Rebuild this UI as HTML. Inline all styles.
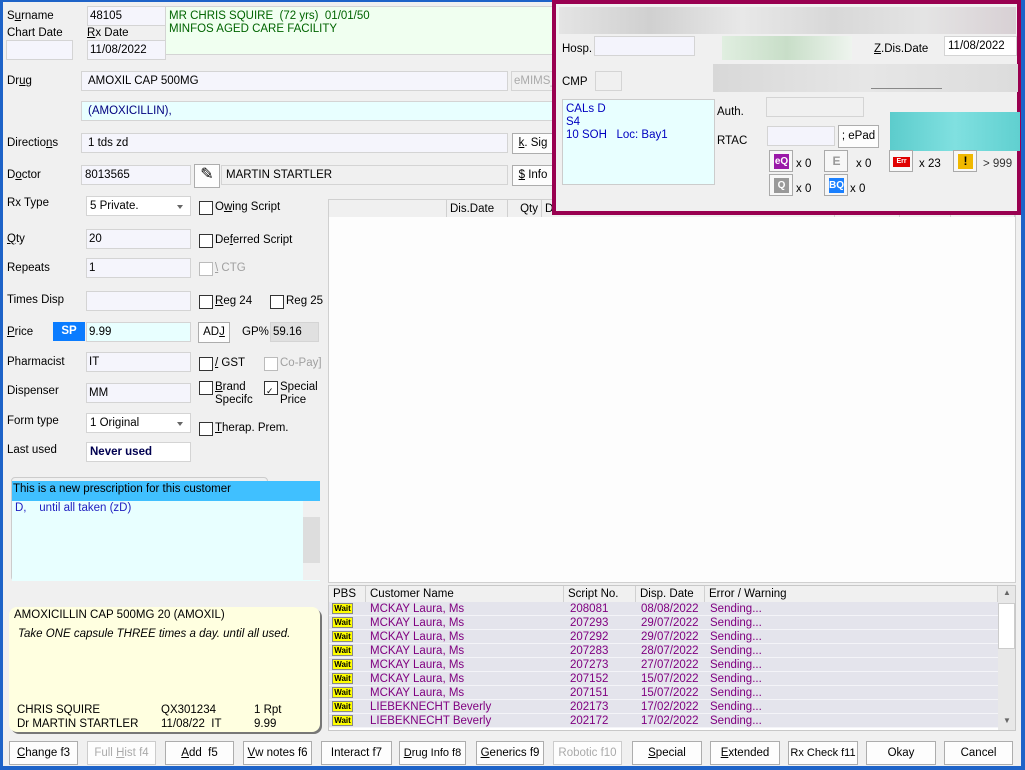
<!DOCTYPE html>
<html><head><meta charset="utf-8"><style>
*{box-sizing:border-box;margin:0;padding:0}
html,body{width:1025px;height:770px;overflow:hidden}
body{background:#f0f0f0;font-family:"Liberation Sans",sans-serif;font-size:11.5px;color:#000;position:relative;white-space:nowrap}
.a{position:absolute}
.l{position:absolute;left:7px;margin-top:1px}
.in{position:absolute;background:#f5f5fc;border:1px solid #d4d4d4;padding:3px 0 0 2px;height:20px;white-space:nowrap;overflow:hidden}
.btn{position:absolute;background:#fdfdfd;border:1px solid #adadad;text-align:center;line-height:22px;height:24px;white-space:nowrap;overflow:hidden}
.cb{position:absolute;padding-left:16px;margin-top:1px}
.cb:before{content:"";position:absolute;left:0;top:0;width:12px;height:12px;border:1px solid #333;background:#fff}
.cb.d{color:#a0a0a0}.cb.d:before{border-color:#bbb}
.sel:after{content:"";position:absolute;right:7px;top:8px;border:3px solid transparent;border-top:4px solid #666}
.th{position:absolute;top:0;height:17px;border-right:1px solid #d0d0d0;padding:3px 3px;background:#f0f0f0}
.row{position:absolute;left:0;width:669px;height:14px;background:#e4e4ec;border-bottom:1px solid #f4f4f8;color:#800080;line-height:14px}
.row span{position:absolute;top:0}
.w{position:absolute;left:3px;top:1px;width:21px;height:11px;background:#ff0;border:1px solid #888;font-size:8px;line-height:9px;color:#000;text-align:center;font-weight:bold}
.ico{position:absolute;width:24px;height:22px;border:1px solid #aaa;background:#f7f7f7}
.ico i{position:absolute;left:4px;top:3px;width:15px;height:15px;font-style:normal;font-weight:bold;font-size:10px;color:#fff;text-align:center;line-height:15px}
</style></head><body>
<div class="a" style="left:0;top:0;width:3px;height:770px;background:#1e63c8"></div>
<div class="a" style="left:0;top:0;width:1025px;height:2px;background:#1e63c8"></div>
<div class="a" style="left:0;top:766px;width:1025px;height:4px;background:#1e63c8"></div>
<div class="a" style="left:1021px;top:0;width:4px;height:770px;background:#1e63c8"></div>

<div class="l" style="top:9px">S<u>u</u>rname</div>
<div class="l" style="top:26px">Chart Date</div>
<div class="a" style="left:87px;top:27px"><u>R</u>x Date</div>
<div class="in" style="left:87px;top:6px;width:79px">48105</div>
<div class="in" style="left:6px;top:40px;width:67px"></div>
<div class="in" style="left:87px;top:40px;width:79px">11/08/2022</div>
<div class="a" style="left:165px;top:6px;width:400px;height:49px;background:#f0fff0;border:1px solid #d4d4d4;color:#006400;padding:3px 0 0 3px;line-height:13px">MR CHRIS SQUIRE &nbsp;(72 yrs) &nbsp;01/01/50<br>MINFOS AGED CARE FACILITY</div>

<div class="l" style="top:74px">Dr<u>u</u>g</div>
<div class="in" style="left:81px;top:71px;width:427px;padding-left:6px">AMOXIL CAP 500MG</div>
<div class="in" style="left:511px;top:71px;width:45px;color:#aaa;background:#f0f0f0">eMIMS_</div>
<div class="in" style="left:81px;top:101px;width:480px;background:#e8ffff;color:#000080;padding-left:6px">(AMOXICILLIN),</div>
<div class="l" style="top:136px">Directio<u>n</u>s</div>
<div class="in" style="left:81px;top:133px;width:427px;padding-left:6px">1 tds zd</div>
<div class="btn" style="left:512px;top:133px;width:42px;height:21px;line-height:19px"><u>k</u>. Sig</div>
<div class="l" style="top:168px">D<u>o</u>ctor</div>
<div class="in" style="left:81px;top:165px;width:110px;padding-left:3px">8013565</div>
<div class="btn" style="left:194px;top:164px;width:26px;height:24px;line-height:20px;font-size:16px">✎</div>
<div class="in" style="left:221px;top:165px;width:287px;background:#f0f0f0;padding-left:4px">MARTIN STARTLER</div>
<div class="btn" style="left:512px;top:165px;width:42px;height:21px;line-height:19px"><u>$</u> Info</div>

<div class="l" style="top:196px">Rx Type</div>
<div class="in sel" style="left:86px;top:196px;width:105px;background:#fff;padding-left:3px">5 Private.</div>
<div class="cb" style="left:199px;top:200px">O<u>w</u>ing Script</div>
<div class="l" style="top:232px"><u>Q</u>ty</div>
<div class="in" style="left:86px;top:229px;width:105px">20</div>
<div class="cb" style="left:199px;top:233px">De<u>f</u>erred Script</div>
<div class="l" style="top:261px">Repeats</div>
<div class="in" style="left:86px;top:258px;width:105px">1</div>
<div class="cb d" style="left:199px;top:261px"><u>\</u> CTG</div>
<div class="l" style="top:293px">Times Disp</div>
<div class="in" style="left:86px;top:291px;width:105px"></div>
<div class="cb" style="left:199px;top:294px"><u>R</u>eg 24</div>
<div class="cb" style="left:270px;top:294px">Reg 25</div>
<div class="l" style="top:325px"><u>P</u>rice</div>
<div class="a" style="left:53px;top:322px;width:32px;height:19px;background:#0a7cff;color:#fff;font-weight:bold;text-align:center;line-height:19px">SP</div>
<div class="in" style="left:86px;top:322px;width:105px;background:#e8ffff">9.99</div>
<div class="btn" style="left:198px;top:322px;width:32px;height:21px;line-height:19px">AD<u>J</u></div>
<div class="a" style="left:242px;top:326px">GP%</div>
<div class="in" style="left:270px;top:322px;width:49px;background:#e0e0e0">59.16</div>
<div class="l" style="top:355px">Pharmacist</div>
<div class="in" style="left:86px;top:352px;width:105px">IT</div>
<div class="cb" style="left:199px;top:356px"><u>/</u> GST</div>
<div class="cb d" style="left:264px;top:356px">Co-Pay]</div>
<div class="l" style="top:384px">Dispenser</div>
<div class="in" style="left:86px;top:383px;width:105px">MM</div>
<div class="cb" style="left:199px;top:380px;line-height:13px"><u>B</u>rand<br>Specifc</div>
<div class="cb" style="left:264px;top:380px;line-height:13px">Special<br>Price</div>
<div class="a" style="left:266px;top:386px;font-size:9px">✓</div>
<div class="l" style="top:414px">Form type</div>
<div class="in sel" style="left:86px;top:413px;width:105px;background:#fff;padding-left:3px">1 Original</div>
<div class="cb" style="left:199px;top:421px"><u>T</u>herap. Prem.</div>
<div class="l" style="top:443px">Last used</div>
<div class="in" style="left:86px;top:442px;width:105px;background:#fff;color:#000050;font-weight:bold;padding-left:3px">Never used</div>

<div class="a" style="left:11px;top:477px;width:257px;height:104px;border:1px solid #ccc;border-radius:4px"></div>
<div class="a" style="left:12px;top:481px;width:308px;height:20px;background:#40c0ff;padding:2px 0 0 1px">This is a new prescription for this customer</div>
<div class="a" style="left:12px;top:501px;width:308px;height:80px;background:#e8ffff;color:#2020c0;padding:1px 0 0 3px">D, &nbsp;&nbsp;&nbsp;until all taken (zD)</div>
<div class="a" style="left:303px;top:501px;width:17px;height:79px;background:#f0f0f0"><div style="position:absolute;top:16px;width:17px;height:46px;background:#ddd"></div></div>

<div class="a" style="left:9px;top:607px;width:311px;height:125px;background:#ffffe0;border-radius:8px;box-shadow:2px 2px 0 #777;padding:2px 0 0 5px;line-height:13px">AMOXICILLIN CAP 500MG 20 (AMOXIL)
<div style="position:absolute;left:9px;top:21px;font-style:italic">Take ONE capsule THREE times a day. until all used.</div>
<div style="position:absolute;left:8px;top:97px">CHRIS SQUIRE</div><div style="position:absolute;left:152px;top:97px">QX301234</div><div style="position:absolute;left:245px;top:97px">1 Rpt</div>
<div style="position:absolute;left:8px;top:111px">Dr MARTIN STARTLER</div><div style="position:absolute;left:152px;top:111px">11/08/22 &nbsp;IT</div><div style="position:absolute;left:245px;top:111px">9.99</div>
</div>

<div class="a" style="left:328px;top:199px;width:688px;height:384px;background:#fdfdfd;border:1px solid #d0d0d0">
<div class="th" style="left:0;width:118px"></div>
<div class="th" style="left:118px;width:61px">Dis.Date</div>
<div class="th" style="left:179px;width:34px;text-align:right">Qty</div>
<div class="th" style="left:213px;width:293px">Drug / Sigs</div>
<div class="th" style="left:506px;width:65px">Price</div>
<div class="th" style="left:571px;width:51px">Dr</div>
<div class="th" style="left:622px;width:64px">Reg. #</div>
</div>

<div class="a" style="left:552px;top:0;width:469px;height:215px;border:4px solid #990050;background:#f0f0f0">
<div class="a" style="left:3px;top:3px;width:457px;height:27px;background:linear-gradient(90deg,#e4e4e4,#d0d0d0,#e8e8e8,#d8d8d8,#e4e4e4,#d8d0d4)"></div>
<div class="a" style="left:6px;top:39px">Hosp.</div>
<div class="in" style="left:38px;top:32px;width:101px;background:#f4f4fc"></div>
<div class="a" style="left:166px;top:32px;width:130px;height:24px;background:linear-gradient(90deg,#e0eee0,#c8dec8,#eef4ee)"></div>
<div class="a" style="left:318px;top:39px"><u>Z</u>.Dis.Date</div>
<div class="in" style="left:388px;top:32px;width:73px;background:#fff;padding-left:3px">11/08/2022</div>
<div class="a" style="left:6px;top:72px">CMP</div>
<div class="in" style="left:39px;top:67px;width:27px;background:#f0f0f0"></div>
<div class="a" style="left:157px;top:60px;width:305px;height:28px;background:linear-gradient(90deg,#d8d8d8,#e6e6e6,#dcdcdc)"></div>
<div class="a" style="left:315px;top:84px;width:71px;height:1px;background:#888"></div>
<div class="a" style="left:6px;top:95px;width:153px;height:86px;background:#e8ffff;border:1px solid #ccc;color:#0000c0;padding:3px 3px;line-height:13px">CALs D<br>S4<br>10 SOH &nbsp;&nbsp;Loc: Bay1</div>
<div class="a" style="left:161px;top:102px">Auth.</div>
<div class="in" style="left:210px;top:93px;width:98px;background:#f0f0f0"></div>
<div class="a" style="left:161px;top:131px">RTAC</div>
<div class="in" style="left:211px;top:122px;width:68px;background:#f4f4fc"></div>
<div class="btn" style="left:282px;top:121px;width:41px;height:23px;line-height:21px">; ePad</div>
<div class="a" style="left:334px;top:108px;width:130px;height:39px;background:linear-gradient(90deg,#5ccccc,#80e0e0,#60d0d0)"></div>
<div class="ico" style="left:213px;top:146px"><i style="background:#9a18a8">eQ</i></div><div class="a" style="left:240px;top:154px">x 0</div>
<div class="ico" style="left:268px;top:146px"><i style="color:#999;font-size:12px">E</i></div><div class="a" style="left:300px;top:154px">x 0</div>
<div class="ico" style="left:333px;top:146px"><i style="background:#e00000;width:17px;height:10px;top:6px;line-height:10px;font-size:7px;left:3px">Err</i></div><div class="a" style="left:363px;top:154px">x 23</div>
<div class="ico" style="left:397px;top:146px"><i style="background:#f0b800;color:#000;font-size:12px">!</i></div><div class="a" style="left:427px;top:154px;color:#333">&gt; 999</div>
<div class="ico" style="left:213px;top:170px"><i style="background:#999">Q</i></div><div class="a" style="left:240px;top:179px">x 0</div>
<div class="ico" style="left:268px;top:170px"><i style="background:#1a80ff">BQ</i></div><div class="a" style="left:294px;top:179px">x 0</div>
</div>

<div class="a" style="left:328px;top:585px;width:688px;height:146px;background:#fff;border:1px solid #c8c8c8;overflow:hidden">
<div class="th" style="left:0;width:37px;height:16px;padding:2px 4px">PBS</div>
<div class="th" style="left:37px;width:198px;height:16px;padding:2px 4px">Customer Name</div>
<div class="th" style="left:235px;width:72px;height:16px;padding:2px 4px">Script No.</div>
<div class="th" style="left:307px;width:69px;height:16px;padding:2px 4px">Disp. Date</div>
<div class="th" style="left:376px;width:293px;height:16px;padding:2px 4px">Error / Warning</div>
<div style="position:absolute;left:0;top:16px">
<div class="row" style="top:0"><div class="w">Wait</div><span style="left:41px">MCKAY Laura, Ms</span><span style="left:241px">208081</span><span style="left:312px">08/08/2022</span><span style="left:381px">Sending...</span></div>
<div class="row" style="top:14px"><div class="w">Wait</div><span style="left:41px">MCKAY Laura, Ms</span><span style="left:241px">207293</span><span style="left:312px">29/07/2022</span><span style="left:381px">Sending...</span></div>
<div class="row" style="top:28px"><div class="w">Wait</div><span style="left:41px">MCKAY Laura, Ms</span><span style="left:241px">207292</span><span style="left:312px">29/07/2022</span><span style="left:381px">Sending...</span></div>
<div class="row" style="top:42px"><div class="w">Wait</div><span style="left:41px">MCKAY Laura, Ms</span><span style="left:241px">207283</span><span style="left:312px">28/07/2022</span><span style="left:381px">Sending...</span></div>
<div class="row" style="top:56px"><div class="w">Wait</div><span style="left:41px">MCKAY Laura, Ms</span><span style="left:241px">207273</span><span style="left:312px">27/07/2022</span><span style="left:381px">Sending...</span></div>
<div class="row" style="top:70px"><div class="w">Wait</div><span style="left:41px">MCKAY Laura, Ms</span><span style="left:241px">207152</span><span style="left:312px">15/07/2022</span><span style="left:381px">Sending...</span></div>
<div class="row" style="top:84px"><div class="w">Wait</div><span style="left:41px">MCKAY Laura, Ms</span><span style="left:241px">207151</span><span style="left:312px">15/07/2022</span><span style="left:381px">Sending...</span></div>
<div class="row" style="top:98px"><div class="w">Wait</div><span style="left:41px">LIEBEKNECHT Beverly</span><span style="left:241px">202173</span><span style="left:312px">17/02/2022</span><span style="left:381px">Sending...</span></div>
<div class="row" style="top:112px"><div class="w">Wait</div><span style="left:41px">LIEBEKNECHT Beverly</span><span style="left:241px">202172</span><span style="left:312px">17/02/2022</span><span style="left:381px">Sending...</span></div>
</div>
<div style="position:absolute;left:669px;top:0;width:18px;height:145px;background:#e8e8e8"><div style="position:absolute;top:17px;width:17px;height:46px;background:#fff;border:1px solid #ccc"></div><div style="position:absolute;top:2px;left:5px;font-size:8px;color:#666">▲</div><div style="position:absolute;top:130px;left:5px;font-size:8px;color:#666">▼</div></div>
</div>

<div class="btn" style="left:9px;top:741px;width:69px"><u>C</u>hange f3</div>
<div class="btn" style="left:87px;top:741px;width:69px;color:#aaa;border-color:#ccc">Full <u>H</u>ist f4</div>
<div class="btn" style="left:165px;top:741px;width:69px"><u>A</u>dd &nbsp;f5</div>
<div class="btn" style="left:243px;top:741px;width:69px"><u>V</u>w notes f6</div>
<div class="btn" style="left:321px;top:741px;width:71px">Interact f7</div>
<div class="btn" style="left:399px;top:741px;width:67px;font-size:11px"><u>D</u>rug Info f8</div>
<div class="btn" style="left:476px;top:741px;width:68px"><u>G</u>enerics f9</div>
<div class="btn" style="left:553px;top:741px;width:69px;color:#aaa;border-color:#ccc">Robotic f10</div>
<div class="btn" style="left:632px;top:741px;width:70px"><u>S</u>pecial</div>
<div class="btn" style="left:710px;top:741px;width:70px"><u>E</u>xtended</div>
<div class="btn" style="left:788px;top:741px;width:70px;font-size:11px">Rx Check f11</div>
<div class="btn" style="left:866px;top:741px;width:70px">Okay</div>
<div class="btn" style="left:944px;top:741px;width:69px">Cancel</div>
</body></html>
